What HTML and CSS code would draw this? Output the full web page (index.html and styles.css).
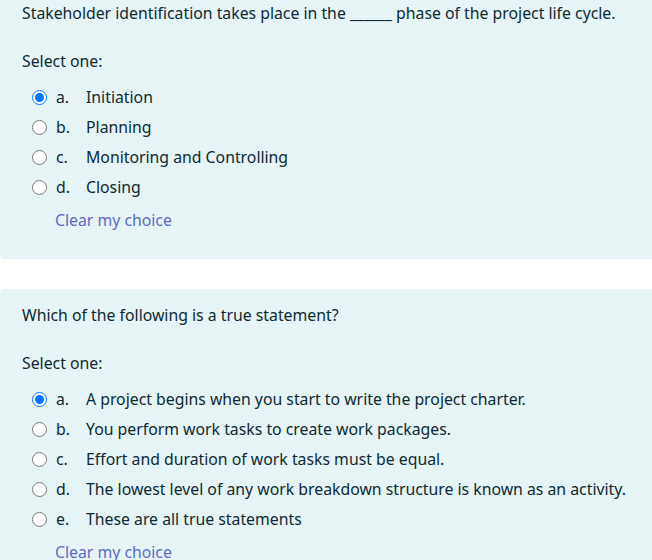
FILE: index.html
```html
<!DOCTYPE html>
<html lang="en">
<head>
    <meta charset="UTF-8">
    <meta name="viewport" content="width=device-width, initial-scale=1.0">
    <title>Quiz</title>
    <link rel="stylesheet" href="styles.css">
</head>
<body>
    <div class="que que-first">
        <div class="qtext">Stakeholder identification takes place in the ______ phase of the project life cycle.</div>
        <div class="prompt">Select one:</div>
        <div class="answer">
            <label class="option"><input type="radio" name="q1" checked><span class="num">a.</span><span class="label">Initiation</span></label>
            <label class="option"><input type="radio" name="q1"><span class="num">b.</span><span class="label">Planning</span></label>
            <label class="option"><input type="radio" name="q1"><span class="num">c.</span><span class="label">Monitoring and Controlling</span></label>
            <label class="option"><input type="radio" name="q1"><span class="num">d.</span><span class="label">Closing</span></label>
        </div>
        <div class="clear"><a href="#">Clear my choice</a></div>
    </div>

    <div class="que">
        <div class="qtext">Which of the following is a true statement?</div>
        <div class="prompt">Select one:</div>
        <div class="answer">
            <label class="option"><input type="radio" name="q2" checked><span class="num">a.</span><span class="label">A project begins when you start to write the project charter.</span></label>
            <label class="option"><input type="radio" name="q2"><span class="num">b.</span><span class="label">You perform work tasks to create work packages.</span></label>
            <label class="option"><input type="radio" name="q2"><span class="num">c.</span><span class="label">Effort and duration of work tasks must be equal.</span></label>
            <label class="option"><input type="radio" name="q2"><span class="num">d.</span><span class="label">The lowest level of any work breakdown structure is known as an activity.</span></label>
            <label class="option"><input type="radio" name="q2"><span class="num">e.</span><span class="label">These are all true statements</span></label>
        </div>
        <div class="clear"><a href="#">Clear my choice</a></div>
    </div>
</body>
</html>
```

FILE: styles.css
```css
body {
    margin: 0;
    background: #fff;
    font-family: "Noto Sans", "Open Sans", sans-serif;
    font-size: 15.8px;
    line-height: 22px;
    color: #0b2a33;
    overflow: hidden;
}
.que {
    background: #e7f4f6;
    border-radius: 4px 0 0 4px;
    padding: 15px 22px 28px 22px;
    margin-bottom: 30px;
}
.que-first {
    margin-top: -26px;
    padding-top: 28px;
}
.qtext {
    margin-bottom: 26px;
}
.prompt {
    margin-bottom: 10px;
}
.answer {
    padding-left: 10px;
}
.option {
    display: flex;
    align-items: center;
    height: 30px;
    cursor: pointer;
}
.option input {
    width: 15px;
    height: 15px;
    margin: 0;
}
.num {
    width: 30px;
    margin-left: 9px;
}
.clear {
    margin-top: 7px;
    padding-left: 33px;
}
.clear a {
    color: #5c6cc4;
    text-decoration: none;
}
```
